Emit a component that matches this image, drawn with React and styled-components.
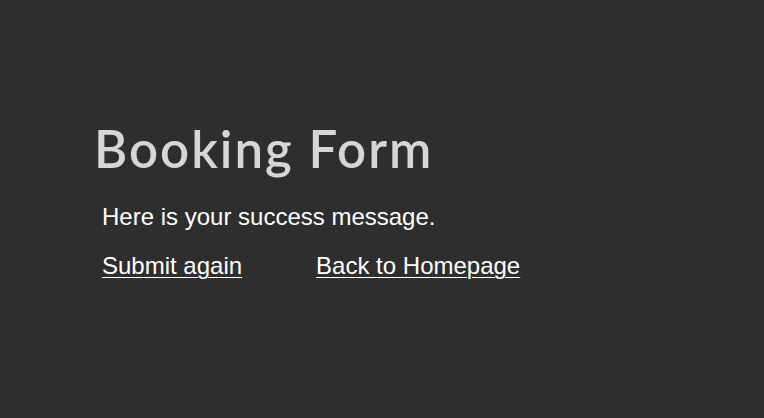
import styled, { createGlobalStyle } from 'styled-components'

const GlobalStyle = createGlobalStyle`
    html, body {
        margin: 0;
        padding: 0;
        background: #2e2e2e;
    }
    body {
        font-family: "Liberation Sans", Arial, sans-serif;
    }
`

const Page = styled.main`
    box-sizing: border-box;
    width: 764px;
    height: 418px;
    padding: 119px 0 0 94px;
    background: #2e2e2e;
`

const Title = styled.h1`
    margin: 0 0 26px;
    font-family: Lato, "Noto Sans", sans-serif;
    font-weight: 600;
    font-size: 51px;
    line-height: 60px;
    letter-spacing: 2px;
    color: #d6d6d6;
`

const Content = styled.section`
    padding-left: 8px;
    color: #ffffff;
    font-size: 24px;
`

const Message = styled.p`
    margin: 0 0 25px;
    line-height: 24px;
`

const Links = styled.div`
    display: flex;
    gap: 74px;
    line-height: 24px;
`

const TextLink = styled.a`
    color: #ffffff;
    text-decoration: underline;
    text-decoration-thickness: 1px;
    text-underline-offset: 3px;
`

function App() {
    return (
        <Page>
            <GlobalStyle />
            <Title>Booking Form</Title>
            <Content>
                <Message>Here is your success message.</Message>
                <Links>
                    <TextLink href="#">Submit again</TextLink>
                    <TextLink href="#">Back to Homepage</TextLink>
                </Links>
            </Content>
        </Page>
    )
}

export default App
